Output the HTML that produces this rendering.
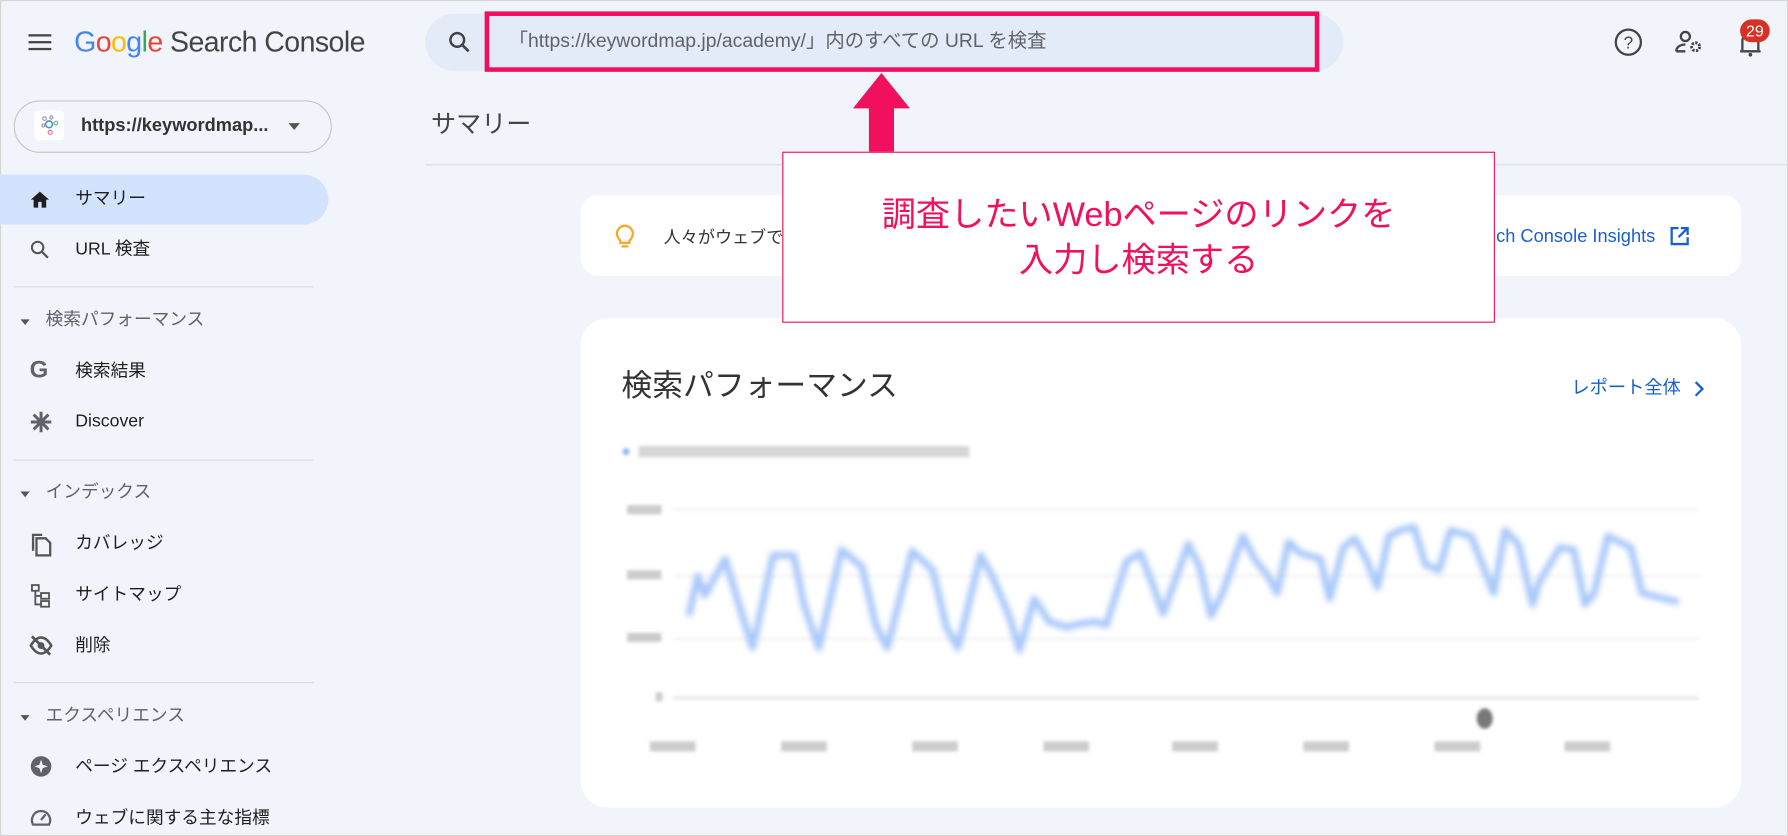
<!DOCTYPE html>
<html><head><meta charset="utf-8"><style>
html,body{margin:0;padding:0;width:1788px;height:836px;overflow:hidden;background:#f1f4fb}
#w{position:absolute;left:0;top:0;width:1568px;height:733px;transform:scale(1.1403,1.1405);transform-origin:0 0;background:#f1f4fb;font-family:"Liberation Sans","Noto Sans CJK JP",sans-serif;color:#1f1f1f;outline:1px solid #d6d6d6;outline-offset:-1px}
.a{position:absolute}
.t{position:absolute;white-space:nowrap;line-height:1}
.nav{font-size:15.5px;color:#1f1f1f}
.sec{font-size:15.5px;color:#5f6368}
.dv{position:absolute;left:12px;width:263px;height:1px;background:#dadce0}
</style></head><body><div id="w">
<!-- hamburger -->
<div class="a" style="left:25px;top:30px;width:20px;height:2px;background:#444"></div>
<div class="a" style="left:25px;top:36px;width:20px;height:2px;background:#444"></div>
<div class="a" style="left:25px;top:42px;width:20px;height:2px;background:#444"></div>
<div class="t" style="left:65px;top:25px;font-size:25px;letter-spacing:-0.5px"><span style="color:#4285f4">G</span><span style="color:#ea4335">o</span><span style="color:#fbbc05">o</span><span style="color:#4285f4">g</span><span style="color:#34a853">l</span><span style="color:#ea4335">e</span> <span style="color:#444">Search Console</span></div>
<!-- search -->
<div class="a" style="left:373px;top:12px;width:805px;height:50px;border-radius:25px;background:#e3ebf9"></div>
<svg class="a" style="left:391px;top:25px" width="24" height="24" viewBox="0 0 24 24"><circle cx="10" cy="10" r="6" fill="none" stroke="#444" stroke-width="2.2"/><path d="M14.5 14.5L20 20" stroke="#444" stroke-width="2.4"/></svg>
<div class="a" style="left:425px;top:10px;width:724px;height:45px;border:4px solid #f0105e"></div>
<div class="t" style="left:446px;top:27px;font-size:17px;color:#5f6368">「https://keywordmap.jp/academy/」内のすべての URL を検査</div>
<!-- right icons -->
<svg class="a" style="left:1415px;top:24px" width="26" height="26" viewBox="0 0 26 26"><circle cx="13" cy="13" r="11" fill="none" stroke="#444" stroke-width="2"/><text x="13" y="18.5" font-size="15" text-anchor="middle" fill="#444" font-family="Liberation Sans">?</text></svg>
<svg class="a" style="left:1467px;top:24px" width="28" height="26" viewBox="0 0 28 26"><circle cx="11" cy="8" r="4" fill="none" stroke="#444" stroke-width="2"/><path d="M3 21c0-4 4-6 8-6" fill="none" stroke="#444" stroke-width="2"/><path d="M3 21h8" stroke="#444" stroke-width="2"/><circle cx="20" cy="17" r="3.5" fill="none" stroke="#444" stroke-width="2.5" stroke-dasharray="2 1.2"/></svg>
<svg class="a" style="left:1523px;top:24px" width="24" height="28" viewBox="0 0 24 28"><path d="M5 20V12a7 7 0 0 1 14 0v8" fill="none" stroke="#444" stroke-width="2"/><path d="M3 21h18" stroke="#444" stroke-width="2"/><circle cx="12" cy="24" r="1.6" fill="#444"/></svg>
<div class="a" style="left:1526px;top:17px;width:26px;height:20px;border-radius:10px;background:#d93025;color:#fff;font-size:14px;text-align:center;line-height:20px">29</div>
<!-- property -->
<div class="a" style="left:12px;top:88px;width:277px;height:44px;border:1px solid #c4c7c5;border-radius:23px"></div>
<div class="a" style="left:30px;top:97px;width:26px;height:26px;background:#fff;border-radius:3px"></div>
<svg class="a" style="left:30px;top:97px" width="26" height="26" viewBox="0 0 26 26"><circle cx="13" cy="12" r="3" fill="none" stroke="#4a90e2" stroke-width="1.4"/><circle cx="9" cy="7" r="1.6" fill="none" stroke="#999"/><circle cx="15" cy="6" r="1.4" fill="none" stroke="#999"/><circle cx="19" cy="11" r="1.6" fill="none" stroke="#6abf69"/><circle cx="8" cy="13" r="1.3" fill="none" stroke="#999"/><circle cx="14" cy="19" r="1.8" fill="none" stroke="#e86aa5"/></svg>
<div class="t" style="left:71px;top:103px;font-size:16px;font-weight:bold;color:#333">https://keywordmap...</div>
<div class="a" style="left:253px;top:108px;border-left:5px solid transparent;border-right:5px solid transparent;border-top:6px solid #555"></div>
<!-- nav -->
<div class="a" style="left:0;top:153px;width:288px;height:44px;background:#d3e3fd;border-radius:0 22px 22px 0"></div>
<svg class="a" style="left:26px;top:166px" width="18" height="18" viewBox="0 0 18 18"><path d="M9 2L1 9h2.5v7h4v-5h3v5h4V9H17z" fill="#1f1f1f"/></svg>
<div class="t nav" style="left:66px;top:167px">サマリー</div>
<svg class="a" style="left:26px;top:210px" width="18" height="18" viewBox="0 0 18 18"><circle cx="7" cy="7" r="5" fill="none" stroke="#555" stroke-width="1.8"/><path d="M10.5 10.5L16 16" stroke="#555" stroke-width="2"/></svg>
<div class="t nav" style="left:66px;top:211px">URL 検査</div>
<div class="dv" style="top:251px"></div>
<div class="a" style="left:18px;top:280px;border-left:4px solid transparent;border-right:4px solid transparent;border-top:5px solid #555"></div>
<div class="t sec" style="left:40px;top:273px">検索パフォーマンス</div>
<div class="t" style="left:26px;top:314px;font-size:21px;font-weight:bold;color:#5f6368">G</div>
<div class="t nav" style="left:66px;top:318px">検索結果</div>
<svg class="a" style="left:26px;top:360px" width="20" height="20" viewBox="0 0 20 20"><path d="M10 1v18M1 10h18M3.5 3.5l13 13M16.5 3.5l-13 13" stroke="#5f6368" stroke-width="2.6"/></svg>
<div class="t nav" style="left:66px;top:362px">Discover</div>
<div class="dv" style="top:403px"></div>
<div class="a" style="left:18px;top:431px;border-left:4px solid transparent;border-right:4px solid transparent;border-top:5px solid #555"></div>
<div class="t sec" style="left:40px;top:424px">インデックス</div>
<svg class="a" style="left:26px;top:466px" width="20" height="22" viewBox="0 0 20 22"><path d="M2 2h9v2H4v13H2z" fill="#555"/><path d="M6 6h8l4 4v11H6z" fill="none" stroke="#555" stroke-width="2"/></svg>
<div class="t nav" style="left:66px;top:469px">カバレッジ</div>
<svg class="a" style="left:26px;top:511px" width="20" height="22" viewBox="0 0 20 22"><rect x="2" y="2" width="6" height="5" fill="none" stroke="#555" stroke-width="1.6"/><rect x="10" y="9" width="7" height="5" fill="none" stroke="#555" stroke-width="1.6"/><rect x="10" y="16" width="7" height="5" fill="none" stroke="#555" stroke-width="1.6"/><path d="M5 7v12h5M5 11.5h5" fill="none" stroke="#555" stroke-width="1.6"/></svg>
<div class="t nav" style="left:66px;top:514px">サイトマップ</div>
<svg class="a" style="left:25px;top:556px" width="22" height="20" viewBox="0 0 22 20"><path d="M2 10c3-5 6-7 9-7s6 2 9 7c-3 5-6 7-9 7s-6-2-9-7z" fill="none" stroke="#555" stroke-width="2.2"/><circle cx="11" cy="10" r="3" fill="#555"/><path d="M3 2l16 16" stroke="#555" stroke-width="2.4"/></svg>
<div class="t nav" style="left:66px;top:559px">削除</div>
<div class="dv" style="top:598px"></div>
<div class="a" style="left:18px;top:627px;border-left:4px solid transparent;border-right:4px solid transparent;border-top:5px solid #555"></div>
<div class="t sec" style="left:40px;top:620px">エクスペリエンス</div>
<svg class="a" style="left:26px;top:662px" width="20" height="20" viewBox="0 0 20 20"><circle cx="10" cy="10" r="9" fill="#5f6368"/><path d="M10 4l1.5 4.5L16 10l-4.5 1.5L10 16l-1.5-4.5L4 10l4.5-1.5z" fill="#f1f4fb"/></svg>
<div class="t nav" style="left:66px;top:665px">ページ エクスペリエンス</div>
<svg class="a" style="left:26px;top:706px" width="20" height="20" viewBox="0 0 20 20"><path d="M3 17a8 8 0 1 1 14 0z" fill="none" stroke="#5f6368" stroke-width="2"/><path d="M10 13l4-5" stroke="#5f6368" stroke-width="2"/></svg>
<div class="t nav" style="left:66px;top:710px">ウェブに関する主な指標</div>
<!-- main -->
<div class="t" style="left:378px;top:98px;font-size:22px;color:#444">サマリー</div>
<div class="a" style="left:373px;top:144px;width:1195px;height:1px;background:#dadce0"></div>
<div class="a" style="left:509px;top:171px;width:1018px;height:71px;background:#fff;border-radius:16px"></div>
<svg class="a" style="left:538px;top:196px" width="20" height="24" viewBox="0 0 20 24"><path d="M6 15c-2-2-3-4-3-6a7 7 0 0 1 14 0c0 2-1 4-3 6v2H6z" fill="none" stroke="#f9a825" stroke-width="2"/><path d="M7 20h6" stroke="#f9a825" stroke-width="2"/></svg>
<div class="t" style="left:582px;top:201px;font-size:15px;color:#333">人々がウェブで</div>
<div class="t" style="left:1312px;top:200px;font-size:16px;color:#1a5fd0">ch Console Insights</div>
<svg class="a" style="left:1464px;top:198px" width="18" height="18" viewBox="0 0 18 18"><path d="M8 2H2v14h14v-6" fill="none" stroke="#1a5fd0" stroke-width="2"/><path d="M10 2h6v6M16 2L8 10" fill="none" stroke="#1a5fd0" stroke-width="2"/></svg>
<div class="a" style="left:509px;top:279px;width:1018px;height:429px;background:#fff;border-radius:24px"></div>
<div class="t" style="left:545px;top:325px;font-size:27px;color:#333">検索パフォーマンス</div>
<div class="t" style="left:1378px;top:333px;font-size:16px;color:#1a5fd0">レポート全体</div>
<svg class="a" style="left:1484px;top:333px" width="12" height="16" viewBox="0 0 12 16"><path d="M3 2l6 6-6 6" fill="none" stroke="#1a5fd0" stroke-width="2"/></svg>
<svg class="a" style="left:509px;top:380px" width="1018" height="300" viewBox="509 380 1018 300">
<defs><filter id="b"><feGaussianBlur stdDeviation="2.5"/></filter><filter id="b2"><feGaussianBlur stdDeviation="1.5"/></filter></defs>
<g filter="url(#b2)"><circle cx="549" cy="396" r="3" fill="#8ab4f8"/><rect x="560" y="391" width="290" height="10" fill="#bbb" opacity=".6"/>
<g fill="#ccc"><rect x="550" y="443" width="30" height="8"/><rect x="550" y="500" width="30" height="8"/><rect x="550" y="555" width="30" height="8"/><rect x="575" y="607" width="6" height="8"/>
<rect x="570" y="650" width="40" height="9"/><rect x="685" y="650" width="40" height="9"/><rect x="800" y="650" width="40" height="9"/><rect x="915" y="650" width="40" height="9"/><rect x="1028" y="650" width="40" height="9"/><rect x="1143" y="650" width="40" height="9"/><rect x="1258" y="650" width="40" height="9"/><rect x="1372" y="650" width="40" height="9"/></g>
<g stroke="#eee" stroke-width="1.5"><path d="M590 447H1490M590 505H1490M590 560H1490"/></g><path d="M590 612H1490" stroke="#ddd" stroke-width="2"/>
<ellipse cx="1302" cy="630" rx="7" ry="9" fill="#777"/></g>
<polyline filter="url(#b)" fill="none" stroke="#a8c7fa" stroke-width="6" stroke-linejoin="round" points="604,540 612,505 618,522 636,490 648,530 660,568 678,487 696,487 705,530 718,568 738,482 756,497 768,548 778,568 800,483 818,500 830,550 840,568 860,487 870,505 885,540 894,570 907,525 920,545 936,550 946,547 960,545 970,548 988,492 1000,485 1010,510 1020,538 1042,477 1052,497 1062,540 1072,520 1090,470 1100,490 1112,505 1120,520 1130,475 1140,485 1158,490 1166,525 1178,480 1188,472 1198,490 1208,515 1218,470 1228,465 1240,462 1250,495 1262,500 1272,465 1290,470 1310,520 1320,465 1332,478 1344,530 1350,510 1368,480 1380,482 1390,530 1398,520 1410,470 1430,480 1440,520 1472,528"/>
</svg>
<!-- arrow -->
<svg class="a" style="left:745px;top:62px" width="56" height="75" viewBox="0 0 56 75"><path d="M28 2L53 33H39V75H17V33H3z" fill="#f0105e"/></svg>
<!-- callout -->
<div class="a" style="left:686px;top:133px;width:623px;height:148px;background:#fff;border:1.5px solid #f0105e"></div>
<div class="t" style="left:686px;top:169px;width:625px;text-align:center;font-size:30px;line-height:40px;color:#f0105e">調査したいWebページのリンクを<br>入力し検索する</div>
</div></body></html>
